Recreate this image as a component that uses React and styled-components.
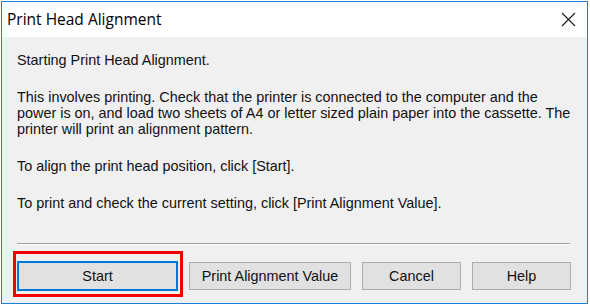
import React from "react";
import styled, { createGlobalStyle } from "styled-components";

const GlobalStyle = createGlobalStyle`
  html, body {
    margin: 0;
    padding: 0;
    background: #ffffff;
  }
  * {
    box-sizing: border-box;
  }
`;

const Window = styled.div`
  width: 587px;
  height: 303px;
  margin: 1px 0 0 1px;
  border: 1px solid #1c80d6;
  background: #f0f0f0;
  display: flex;
  flex-direction: column;
  overflow: hidden;
  font-family: "Liberation Sans", Arial, sans-serif;
  color: #000;
`;

const TitleBar = styled.div`
  height: 35px;
  flex: none;
  background: #ffffff;
  display: flex;
  align-items: center;
  justify-content: space-between;
  padding: 0 11px 0 5px;
`;

const Title = styled.div`
  font-family: "Open Sans", "Noto Sans", sans-serif;
  font-size: 15.5px;
  color: #000;
  padding-bottom: 2px;
`;

const CloseButton = styled.div`
  width: 16px;
  height: 16px;
  display: flex;
  align-items: center;
  justify-content: center;
`;

const Content = styled.div`
  flex: 1;
  display: flex;
  flex-direction: column;
  padding: 15px 15px 0 15px;
`;

const Paragraph = styled.p`
  margin: 0 0 ${(p) => p.$gap ?? 21}px 0;
  font-size: 14.4px;
  line-height: 16px;
  white-space: nowrap;
  color: #111;
`;

const Separator = styled.div`
  margin-top: ${(p) => p.$top}px;
  height: 2px;
  border-top: 1px solid #a0a0a0;
  border-bottom: 1px solid #ffffff;
  margin-right: 2px;
`;

const ButtonRow = styled.div`
  display: flex;
  gap: 11px;
  margin-top: 16px;
`;

const HighlightWrap = styled.div`
  position: relative;
  display: flex;
`;

const Highlight = styled.div`
  position: absolute;
  top: -10px;
  bottom: -6px;
  left: -4px;
  right: -5px;
  border: 3px solid #f40000;
  pointer-events: none;
`;

const Button = styled.button`
  width: ${(p) => p.$w}px;
  height: ${(p) => (p.$focused ? 30 : 28)}px;
  margin-top: ${(p) => (p.$focused ? 0 : 1)}px;
  background: #e1e1e1;
  border: ${(p) => (p.$focused ? "2px solid #0078d7" : "1px solid #adadad")};
  font-family: "Liberation Sans", Arial, sans-serif;
  font-size: 14.4px;
  color: #111;
  padding: 0;
  display: flex;
  align-items: center;
  justify-content: center;
`;

function CloseIcon() {
  return (
    <svg width="15" height="15" viewBox="0 0 15 15">
      <path d="M1 1 L14 14 M14 1 L1 14" stroke="#1a1a1a" strokeWidth="1.1" fill="none" />
    </svg>
  );
}

export default function App() {
  return (
    <>
      <GlobalStyle />
      <Window>
        <TitleBar>
          <Title>Print Head Alignment</Title>
          <CloseButton>
            <CloseIcon />
          </CloseButton>
        </TitleBar>
        <Content>
          <Paragraph>Starting Print Head Alignment.</Paragraph>
          <Paragraph>
            This involves printing. Check that the printer is connected to the computer and the
            <br />
            power is on, and load two sheets of A4 or letter sized plain paper into the cassette. The
            <br />
            printer will print an alignment pattern.
          </Paragraph>
          <Paragraph>To align the print head position, click [Start].</Paragraph>
          <Paragraph $gap={0}>
            To print and check the current setting, click [Print Alignment Value].
          </Paragraph>
          <Separator $top={32} />
          <ButtonRow>
            <HighlightWrap>
              <Button $w={161} $focused>
                Start
              </Button>
              <Highlight />
            </HighlightWrap>
            <Button $w={162}>Print Alignment Value</Button>
            <Button $w={99}>Cancel</Button>
            <Button $w={99}>Help</Button>
          </ButtonRow>
        </Content>
      </Window>
    </>
  );
}
